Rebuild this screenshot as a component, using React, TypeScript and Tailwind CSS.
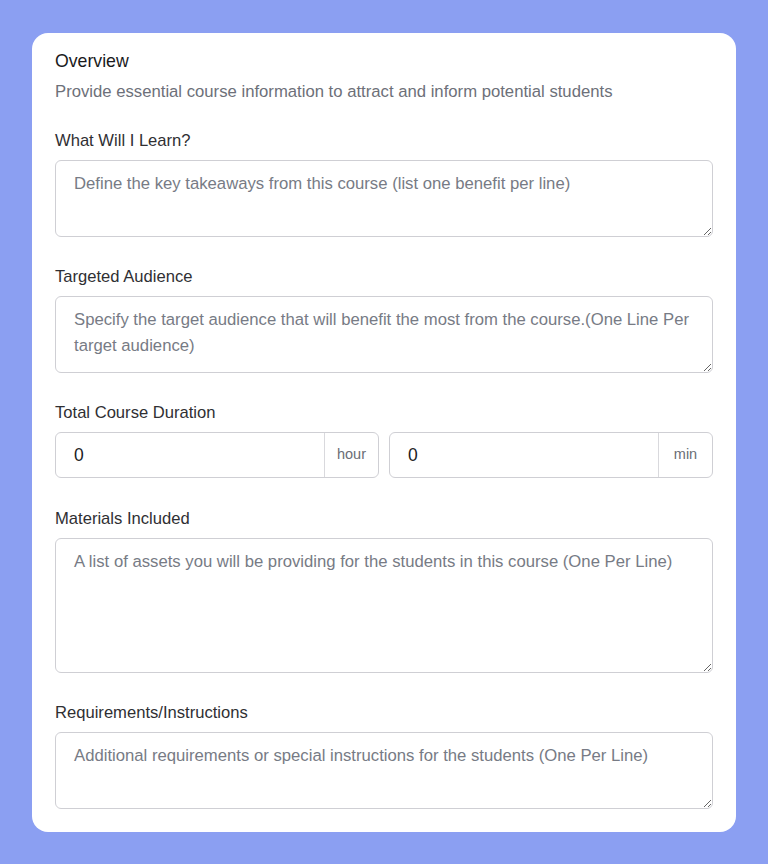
const font = { fontFamily: '"Liberation Sans", Arial, sans-serif' }

function Label({ children }: { children: React.ReactNode }) {
  return <label className="block text-[16.6px] leading-6 text-[#2f2f33] mb-[7px]">{children}</label>
}

function Area({ placeholder, h }: { placeholder: string; h: string }) {
  return (
    <textarea
      placeholder={placeholder}
      className={`block w-full ${h} rounded-md border border-[#cfcfd4] bg-white px-[18px] pt-[10px] text-[16.7px] leading-[26px] text-[#222] placeholder:text-[#777b85] outline-none`}
    />
  )
}

function Duration({ unit }: { unit: string }) {
  return (
    <div className="flex h-[46px] flex-1 rounded-md border border-[#cfcfd4] bg-white overflow-hidden">
      <input
        defaultValue="0"
        className="min-w-0 flex-1 px-[18px] text-[17.5px] text-[#1c1c1e] outline-none bg-transparent"
      />
      <span className="flex w-[54px] items-center justify-center border-l border-[#d9d9dd] text-[14.5px] text-[#6b6e76]">
        {unit}
      </span>
    </div>
  )
}

export default function App() {
  return (
    <div className="min-h-screen bg-[#8b9ff2] px-8 pt-[33px] pb-8" style={font}>
      <div className="rounded-[16px] bg-white px-[23px] pt-[16px] pb-[23px]">
        <h2 className="text-[17.7px] leading-6 text-[#1a1a1c]">Overview</h2>
        <p className="mt-[7px] text-[16.7px] leading-6 text-[#6d7079]">
          Provide essential course information to attract and inform potential students
        </p>

        <div className="mt-[25px]">
          <Label>What Will I Learn?</Label>
          <Area h="h-[77px]" placeholder="Define the key takeaways from this course (list one benefit per line)" />
        </div>

        <div className="mt-[28px]">
          <Label>Targeted Audience</Label>
          <Area
            h="h-[77px]"
            placeholder="Specify the target audience that will benefit the most from the course.(One Line Per target audience)"
          />
        </div>

        <div className="mt-[28px]">
          <Label>Total Course Duration</Label>
          <div className="flex gap-[10px]">
            <Duration unit="hour" />
            <Duration unit="min" />
          </div>
        </div>

        <div className="mt-[29px]">
          <Label>Materials Included</Label>
          <Area
            h="h-[135px]"
            placeholder="A list of assets you will be providing for the students in this course (One Per Line)"
          />
        </div>

        <div className="mt-[28px]">
          <Label>Requirements/Instructions</Label>
          <Area
            h="h-[77px]"
            placeholder="Additional requirements or special instructions for the students (One Per Line)"
          />
        </div>
      </div>
    </div>
  )
}
